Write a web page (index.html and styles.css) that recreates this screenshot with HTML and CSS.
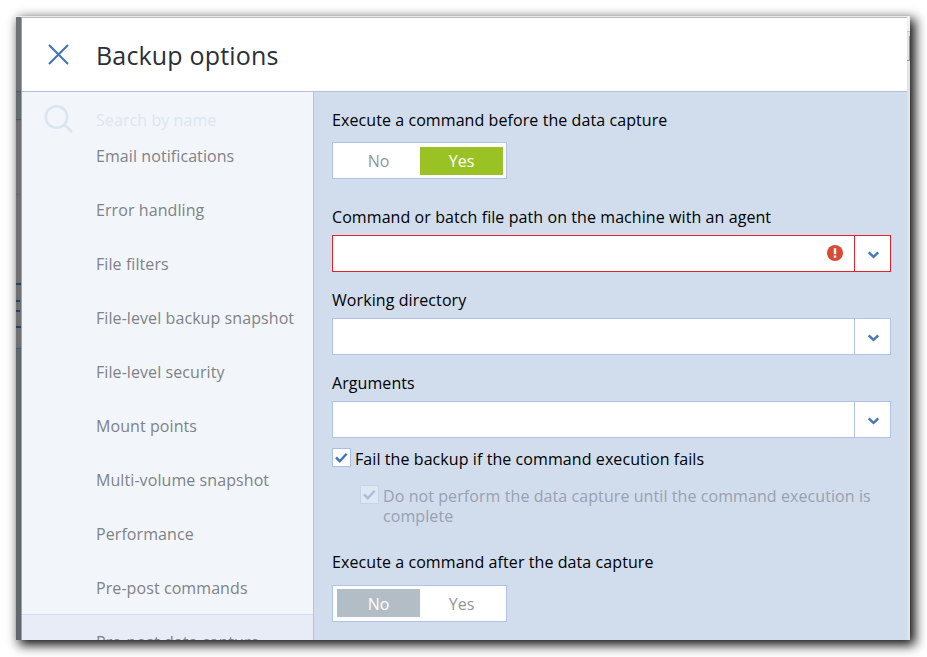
FILE: index.html
```
<!DOCTYPE html>
<html lang="en">
<head>
<meta charset="utf-8">
<title>Backup options</title>
<link rel="stylesheet" href="styles.css">
</head>
<body>
<div class="window">
  <div class="backdrop">
    <i class="seam s1"></i><i class="seam s2"></i><i class="seam s3"></i><i class="seam link s4"></i><i class="seam link s5"></i><i class="seam link s6"></i><i class="seam link s7"></i><i class="seam s8"></i>
  </div>
  <div class="dialog">
    <header class="header">
      <svg class="close" width="22" height="22" viewBox="0 0 22 22"><path d="M1 1 20 20M20 1 1 20"/></svg>
      <h1 class="title">Backup options</h1>
    </header>
    <div class="body">
      <nav class="sidebar">
        <div class="search">
          <svg class="search-icon" width="30" height="30" viewBox="0 0 30 30"><circle cx="12.5" cy="12" r="10.7"/><path d="M20 19.5 28 27"/></svg>
          <span>Search by name</span>
        </div>
        <ul class="list">
          <li>Email notifications</li>
          <li>Error handling</li>
          <li>File filters</li>
          <li>File-level backup snapshot</li>
          <li>File-level security</li>
          <li>Mount points</li>
          <li>Multi-volume snapshot</li>
          <li>Performance</li>
          <li>Pre-post commands</li>
          <li class="selected">Pre-post data capture</li>
        </ul>
      </nav>
      <main class="content">
        <div class="label">Execute a command before the data capture</div>
        <div class="toggle"><span>No</span><span class="yes">Yes</span></div>
        <div class="label path-label">Command or batch file path on the machine with an agent</div>
        <div class="combo error">
          <div class="field"><svg width="16" height="16" viewBox="0 0 16 16"><circle cx="8" cy="8" r="8" fill="#d94b35"/><path d="M6.8 3.2h2.4v6H6.8zM6.8 10.6h2.4v2.2H6.8z" fill="#fff"/></svg></div>
          <div class="arrow"><svg width="12" height="8" viewBox="0 0 12 8"><path d="M1.7 1.4 6.5 5.8 11.3 1.4"/></svg></div>
        </div>
        <div class="label">Working directory</div>
        <div class="combo">
          <div class="field"></div>
          <div class="arrow"><svg width="12" height="8" viewBox="0 0 12 8"><path d="M1.7 1.4 6.5 5.8 11.3 1.4"/></svg></div>
        </div>
        <div class="label">Arguments</div>
        <div class="combo">
          <div class="field"></div>
          <div class="arrow"><svg width="12" height="8" viewBox="0 0 12 8"><path d="M1.7 1.4 6.5 5.8 11.3 1.4"/></svg></div>
        </div>
        <div class="check">
          <span class="box"><svg width="13" height="11" viewBox="0 0 13 11"><path d="M1 5.4 4.8 9.2 11.6 1.8"/></svg></span>
          <span>Fail the backup if the command execution fails</span>
        </div>
        <div class="check disabled">
          <span class="box"><svg width="13" height="11" viewBox="0 0 13 11"><path d="M1 5.4 4.8 9.2 11.6 1.8"/></svg></span>
          <span>Do not perform the data capture until the command execution is complete</span>
        </div>
        <div class="label after-label">Execute a command after the data capture</div>
        <div class="toggle off"><span class="no">No</span><span>Yes</span></div>
      </main>
    </div>
  </div>
  <div class="edge"><i class="thumb"></i></div>
</div>
</body>
</html>
```
FILE: styles.css
```
* { box-sizing: border-box; }
body {
  margin: 0;
  padding: 16px;
  height: 657px;
  overflow: hidden;
  background: #fff;
  font: 16px/20px "Open Sans", "Noto Sans", sans-serif;
  letter-spacing: .08px;
  color: #000;
}
.window {
  display: flex;
  width: 894px;
  height: 624px;
  border-top: 1px solid #ececec;
  box-shadow: 4px 4px 11px 1px rgba(0, 0, 0, .95);
  background: #fff;
}
.backdrop {
  position: relative;
  width: 5px;
  background: linear-gradient(#707173 0, #707173 74px, #666a71 75px, #666a71 103px, #6e7072 104px, #6e7072 330px, #62666d 331px);
}
.seam { position: absolute; left: 0; width: 5px; height: 1px; background: #51565e; }
.link { height: 2px; background: #253f69; }
.s1 { top: 74px; }
.s2 { top: 102px; }
.s3 { top: 177px; background: #666a70; }
.s4 { top: 266px; }
.s5 { top: 283px; width: 4px; }
.s6 { top: 293px; width: 4px; }
.s7 { top: 309px; }
.s8 { top: 331px; background: #4d5c78; }
.dialog {
  display: flex;
  flex-direction: column;
  width: 886px;
  border-left: 1px solid #8ba3cc;
  border-top: 1px solid #bababa;
}
.header {
  display: flex;
  align-items: center;
  height: 74px;
  padding-left: 26px;
  border-bottom: 1px solid #b0c0da;
  background: #fff;
}
.close { fill: none; stroke: #4374b8; stroke-width: 2.1; }
.title {
  margin: 1px 0 0 26px;
  font-size: 25px;
  line-height: 34px;
  font-weight: 400;
  letter-spacing: .17px;
  color: #2b2f36;
}
.body { display: flex; height: 548px; overflow: hidden; }
.sidebar {
  width: 292px;
  border-right: 1px solid #b0c4e2;
  background: #f2f6fb;
  color: #808286;
}
.search {
  display: flex;
  height: 37px;
  padding: 13px 0 0 22px;
  color: #dde5f0;
}
.search span { margin: 5px 0 0 22px; }
.search-icon { flex: none; fill: none; stroke: #dbe5f0; stroke-width: 2.6; }
.list { margin: 0; padding: 0; list-style: none; }
.list li { height: 54px; padding: 17px 0 0 74px; }
.list .selected {
  margin-top: -1px;
  height: 55px;
  border-top: 1px solid #d3deee;
  background: #e7ecf6;
}
.content { width: 593px; padding: 18px 16px 0 18px; background: #d1ddec; }
.label { height: 20px; }
.toggle {
  display: flex;
  width: 175px;
  height: 37px;
  margin-top: 12px;
  padding: 4px 3px 3px 4px;
  border: 1px solid #b0c3e4;
  background: #fff;
  color: #91969d;
  line-height: 28px;
  letter-spacing: 0;
  text-align: center;
}
.toggle span { width: 83px; height: 28px; }
.toggle .yes { background: #9bc225; color: #fff; }
.toggle .no { background: #b2bdc5; color: #fff; }
.off { margin-top: 13px; padding-top: 3px; line-height: 30px; }
.path-label { margin-top: 28px; }
.combo {
  display: flex;
  height: 37px;
  margin: 8px 0 18px;
  border: 1px solid #b0c3e4;
  background: #fff;
}
.field { display: flex; flex: 1; justify-content: flex-end; padding: 9px 11px 0 0; }
.arrow {
  display: flex;
  width: 36px;
  align-items: center;
  justify-content: center;
  padding-top: 3px;
  border-left: 1px solid #b0c3e4;
}
.arrow svg { fill: none; stroke: #4a77bb; stroke-width: 2.5; }
.error, .error .arrow { border-color: #e1242c; }
.check { display: flex; gap: 4px; margin-top: -8px; }
.box {
  display: flex;
  flex: none;
  align-items: center;
  justify-content: center;
  width: 19px;
  height: 19px;
  border: 1px solid #aabfe4;
  background: #fff;
}
.box svg { fill: none; stroke: #4472b9; stroke-width: 2.4; }
.check > span + span { margin-top: 1px; }
.disabled { margin: 16px 0 0 28px; color: #98a1b1; }
.disabled .box { border-color: #c5d3e9; background: #dfe7f2; }
.disabled .box svg { stroke: #a9bedf; }
.after-label { margin-top: 26px; }
.edge { position: relative; width: 3px; background: linear-gradient(#f2f2f2 0, #f2f2f2 14px, #c8c8c8 14px, #c8c8c8 15px, #e2e3e5 15px); }
.thumb { position: absolute; left: 0; top: 19px; width: 3px; height: 25px; border-right: 1px solid #999; border-bottom: 1px solid #999; }
```
